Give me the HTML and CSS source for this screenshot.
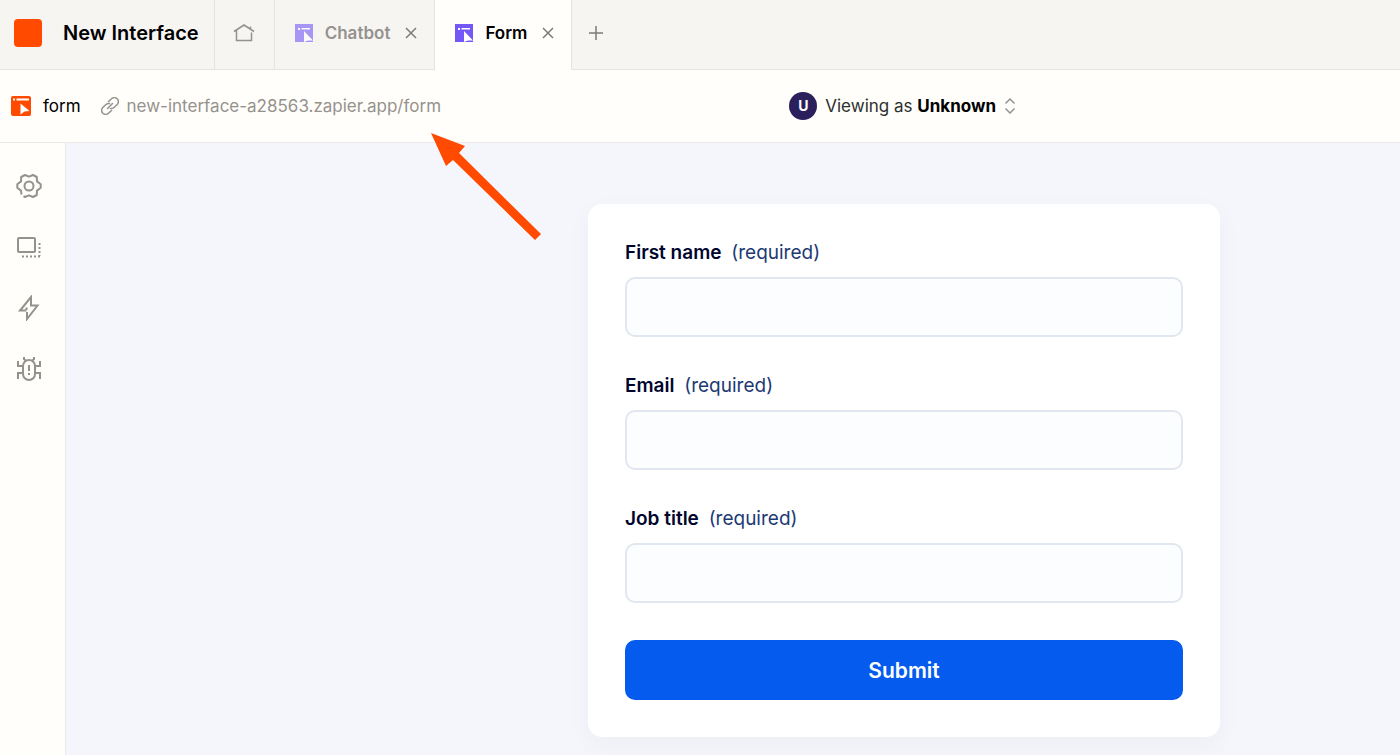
FILE: index.html
```html
<!DOCTYPE html>
<html lang="en">
<head>
    <meta charset="UTF-8">
    <meta name="viewport" content="width=device-width, initial-scale=1.0">
    <title>New Interface</title>
    <link rel="stylesheet" href="styles.css">
</head>
<body>
    <!-- Tabs -->
    <header class="topbar">
        <div class="brand">
            <span class="brand-logo"></span>
            <h1>New Interface</h1>
        </div>
        <button class="tab tab-home" aria-label="Home">
            <svg width="22" height="20" viewBox="0 0 22 20" fill="none" stroke="#95928e" stroke-width="1.5">
                <path d="M1 8.5 L11 2 L21 8.5 M3.5 7.5V17.5H18.5V9.5M17.5 6V3.5"/>
            </svg>
        </button>
        <div class="tab">
            <svg class="muted" width="18" height="18" viewBox="0 0 18 18">
                <path fill="#7358f7" d="M0 0H18V18H0Z"/>
                <path fill="#fff" d="M3 4H5V6H3ZM6.5 4H15V5.5H6.5ZM9 7L18 16.5H13L9 18Z"/>
            </svg>
            <a href="#chatbot">Chatbot</a>
            <button class="close" aria-label="Close Chatbot">
                <svg width="12" height="12" viewBox="0 0 12 12"><path d="M1 1L11 11M11 1L1 11"/></svg>
            </button>
        </div>
        <div class="tab tab-active">
            <svg width="18" height="18" viewBox="0 0 18 18">
                <path fill="#7358f7" d="M0 0H18V18H0Z"/>
                <path fill="#fff" d="M3 4H5V6H3ZM6.5 4H15V5.5H6.5ZM9 7L18 16.5H13L9 18Z"/>
            </svg>
            <a href="#form">Form</a>
            <button class="close" aria-label="Close Form">
                <svg width="12" height="12" viewBox="0 0 12 12"><path d="M1 1L11 11M11 1L1 11"/></svg>
            </button>
        </div>
        <div class="tab-rest">
            <button class="close" aria-label="Add page">
                <svg width="14" height="14" viewBox="0 0 14 14"><path d="M7 0V14M0 7H14"/></svg>
            </button>
        </div>
    </header>

    <!-- Page address and viewer -->
    <div class="toolbar">
        <svg width="20" height="20" viewBox="0 0 20 20">
            <rect width="20" height="20" rx="2" fill="#ff4a00"/>
            <path fill="#fff" d="M2 2.5H4V4.5H2ZM5.5 2.5H18V4.5H5.5ZM9.5 7.5L18.5 15L13.5 15.5L9.5 18.5Z"/>
        </svg>
        <span class="page-name">form</span>
        <svg width="18" height="18" viewBox="0 0 18 18" fill="none" stroke="#95928e" stroke-width="1.5" stroke-linecap="round">
            <path d="M7.5 4.5L10.5 1.8A4 4 0 0 1 16.2 7.5L13 10.5A4 4 0 0 1 9.5 11.5M10.5 13.5L7.5 16.2A4 4 0 0 1 1.8 10.5L5 7.5A4 4 0 0 1 8.5 6.5M6.5 11.5L11.5 6.5"/>
        </svg>
        <a class="page-url" href="#form">new-interface-a28563.zapier.app/form</a>
        <button class="viewer">
            <span class="avatar">U</span>
            <span>Viewing as <strong>Unknown</strong></span>
            <svg width="12" height="16" viewBox="0 0 12 16" fill="none" stroke="#95928e" stroke-width="1.5">
                <path d="M1.5 5.5L6 1L10.5 5.5M1.5 10.5L6 15L10.5 10.5"/>
            </svg>
        </button>
    </div>

    <div class="workspace">
        <nav class="sidebar">
            <button aria-label="Settings">
                <svg width="26" height="26" viewBox="0 0 26 26">
                    <path stroke-linejoin="round" d="M5.5 21.5L5 17.6L1.3 14.8V11.2L5 8.4L5.2 4L9 2L13 3.7L17 2L20.8 4L21 8.4L24.7 11.2V14.8L21 17.6L20.8 22L17 24L13 22.3L9 24L7.5 23.2"/>
                    <circle cx="13" cy="13" r="4.5"/>
                </svg>
            </button>
            <button aria-label="Components">
                <svg width="26" height="26" viewBox="0 0 26 26">
                    <rect x="2" y="4" width="17" height="14" rx="1"/>
                    <path stroke-dasharray="2 2" d="M6 22.5H25M23.5 9V22"/>
                </svg>
            </button>
            <button aria-label="Actions">
                <svg width="26" height="26" viewBox="0 0 26 26">
                    <path d="M10.5 15.5H4L15 2V10.5H21.5L11 24V17M10.5 15V12.5"/>
                </svg>
            </button>
            <button aria-label="Debug">
                <svg width="26" height="26" viewBox="0 0 26 26">
                    <rect x="7" y="4" width="12" height="20" rx="6"/>
                    <path d="M8 1V3L10 5M18 1V3L16 5M2 5V10H7M24 5V10H19M2 23V17H7M24 23V17H19M13 9V15M13 17V19"/>
                </svg>
            </button>
        </nav>

        <main class="canvas">
            <form class="card">
                <div class="field">
                    <label for="first-name">First name <span>(required)</span></label>
                    <input type="text" id="first-name" name="first-name" required>
                </div>
                <div class="field">
                    <label for="email">Email <span>(required)</span></label>
                    <input type="email" id="email" name="email" required>
                </div>
                <div class="field">
                    <label for="job-title">Job title <span>(required)</span></label>
                    <input type="text" id="job-title" name="job-title" required>
                </div>
                <button class="submit" type="submit">Submit</button>
            </form>
        </main>
    </div>

    <!-- Arrow pointing at the page address -->
    <svg class="arrow" width="112" height="110" viewBox="0 0 112 110">
        <path fill="#ff4a00" d="M0 0L34 13L28 20L110 101L104 107L22 27L15 33Z"/>
    </svg>
</body>
</html>
```
FILE: styles.css
```css
* {
    box-sizing: border-box;
}

body {
    margin: 0;
    min-height: 100vh;
    display: flex;
    flex-direction: column;
    font-family: Inter, "Liberation Sans", sans-serif;
    font-size: 17px;
    color: #000;
    background: #fffefa;
    overflow: hidden;
}

h1 {
    margin: 0;
    font-size: 20px;
    font-weight: 600;
}

a {
    color: inherit;
    text-decoration: none;
}

button {
    padding: 0;
    border: none;
    background: none;
    color: inherit;
    font: inherit;
    cursor: pointer;
}

svg {
    display: block;
    flex: none;
}

/* ========== Tabs ========== */
.topbar {
    display: flex;
    height: 70px;
}

.brand,
.tab,
.tab-rest {
    display: flex;
    align-items: center;
    padding-bottom: 3px;
    background: #f6f5f2;
    border-right: 1px solid #e5e4e0;
    border-bottom: 1px solid #e5e4e0;
}

.brand {
    gap: 21px;
    padding-left: 14px;
    padding-right: 15px;
}

.brand-logo {
    width: 28px;
    height: 28px;
    border-radius: 4px;
    background: #ff4a00;
}

.tab {
    gap: 12px;
    padding-left: 20px;
    padding-right: 17px;
    font-weight: 600;
    color: #95928e;
}

.tab-home {
    padding-left: 18px;
    padding-right: 19px;
}

.tab-active {
    color: #000;
    background: #fffefa;
    border-bottom-color: #fffefa;
}

.tab-rest {
    flex: 1;
    padding-left: 17px;
    border-right: none;
}

.muted {
    opacity: 0.6;
}

.close svg {
    fill: none;
    stroke: #7d7b77;
    stroke-width: 1.5;
}

.tab .close {
    margin-left: 3px;
}

/* ========== Toolbar ========== */
.toolbar {
    display: flex;
    align-items: center;
    height: 73px;
    padding-left: 11px;
    padding-right: 384px;
    border-bottom: 1px solid #ebeae8;
}

.page-name {
    margin-left: 12px;
    margin-right: 20px;
}

.page-url {
    margin-left: 8px;
    color: #95928e;
}

.viewer {
    display: flex;
    align-items: center;
    gap: 8px;
    margin-left: auto;
    color: #2d2e2e;
}

.viewer strong {
    font-weight: 700;
    color: #000;
}

.avatar {
    width: 28px;
    height: 28px;
    border-radius: 50%;
    background: #2b1f5c;
    color: #fff;
    font-size: 14px;
    font-weight: 700;
    line-height: 28px;
}

/* ========== Workspace ========== */
.workspace {
    display: flex;
    flex: 1;
}

.sidebar {
    display: flex;
    flex-direction: column;
    align-items: center;
    gap: 35px;
    width: 66px;
    padding-top: 30px;
    padding-right: 8px;
    border-right: 1px solid #ebeae8;
}

.sidebar svg {
    fill: none;
    stroke: #95928e;
    stroke-width: 2;
}

.canvas {
    display: flex;
    flex: 1;
    justify-content: center;
    align-items: flex-start;
    padding: 61px 0 17px 342px;
    background: #f4f6fc;
}

/* ========== Form ========== */
.card {
    display: flex;
    flex-direction: column;
    gap: 37px;
    width: 100%;
    max-width: 632px;
    padding: 37px;
    border-radius: 14px;
    background: #fff;
    box-shadow: 0 8px 24px rgba(40, 40, 60, 0.04);
}

.field {
    display: flex;
    flex-direction: column;
    gap: 12px;
}

.field label {
    font-size: 19px;
    font-weight: 600;
    line-height: 24px;
    color: #00052e;
}

.field label span {
    margin-left: 5px;
    font-weight: 400;
    color: #1d3a74;
}

.field input {
    width: 100%;
    height: 60px;
    padding: 0 16px;
    border: 2px solid #e1e7f0;
    border-radius: 10px;
    background: #fcfdff;
    font: inherit;
}

.submit {
    height: 60px;
    border-radius: 10px;
    background: #045bee;
    color: #fff;
    font-size: 21px;
    font-weight: 600;
}

.arrow {
    position: absolute;
    left: 431px;
    top: 133px;
    pointer-events: none;
}
```
